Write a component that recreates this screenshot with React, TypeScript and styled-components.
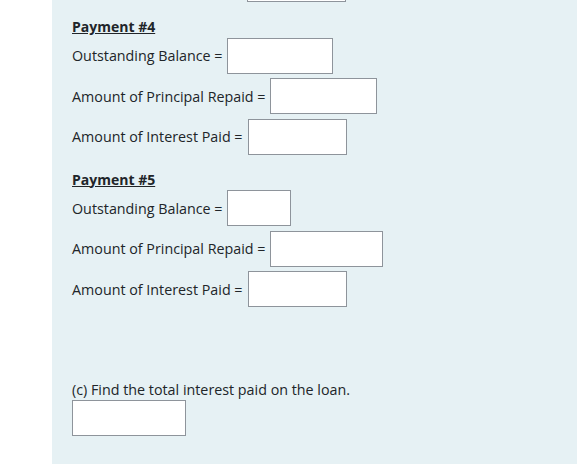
import styled, { createGlobalStyle } from "styled-components";

const Global = createGlobalStyle`
  body {
    margin: 0;
    background: #ffffff;
    font-family: "Open Sans", "Noto Sans", sans-serif;
  }
`;

const Page = styled.div`
  width: 577px;
  height: 464px;
  overflow: hidden;
  display: flex;
`;

const Panel = styled.div`
  margin-left: 52px;
  flex: 1;
  background-color: #e6f1f4;
  padding-left: 20px;
  color: #212529;
  font-size: 14.3px;
`;

// content is scrolled up: only the bottom edge of the previous answer box shows
const Scrolled = styled.div`
  margin-top: -34px;
  display: flex;
  flex-direction: column;
`;

const PrevRow = styled.div`
  display: flex;
  padding-left: 175px;
`;

const Section = styled.div`
  display: flex;
  flex-direction: column;
  gap: 4.5px;
  margin-top: 16px;
`;

const Heading = styled.div`
  font-weight: 700;
  font-size: 14px;
  text-decoration: underline;
  line-height: 17px;
  margin-bottom: -2px;
`;

const Row = styled.div`
  display: flex;
  align-items: center;
  gap: 5px;
  height: 36px;
`;

const Label = styled.span`
  white-space: nowrap;
`;

const AnswerBox = styled.div<{ $w: number }>`
  box-sizing: border-box;
  width: ${(p) => p.$w}px;
  height: 36px;
  background: #ffffff;
  border: 1px solid #8e949b;
`;

const Question = styled.div`
  margin-top: 73px;
  line-height: 20px;
`;

type Field = { label: string; w: number };

const payments: { title: string; fields: Field[] }[] = [
  {
    title: "Payment #4",
    fields: [
      { label: "Outstanding Balance =", w: 106 },
      { label: "Amount of Principal Repaid =", w: 107 },
      { label: "Amount of Interest Paid =", w: 99 },
    ],
  },
  {
    title: "Payment #5",
    fields: [
      { label: "Outstanding Balance =", w: 64 },
      { label: "Amount of Principal Repaid =", w: 113 },
      { label: "Amount of Interest Paid =", w: 99 },
    ],
  },
];

export default function App() {
  return (
    <>
      <Global />
      <Page>
        <Panel>
          <Scrolled>
            <PrevRow>
              <AnswerBox $w={99} />
            </PrevRow>
            {payments.map((p) => (
              <Section key={p.title}>
                <Heading>{p.title}</Heading>
                {p.fields.map((f) => (
                  <Row key={f.label}>
                    <Label>{f.label}</Label>
                    <AnswerBox $w={f.w} />
                  </Row>
                ))}
              </Section>
            ))}
            <Question>(c) Find the total interest paid on the loan.</Question>
            <AnswerBox $w={114} />
          </Scrolled>
        </Panel>
      </Page>
    </>
  );
}
